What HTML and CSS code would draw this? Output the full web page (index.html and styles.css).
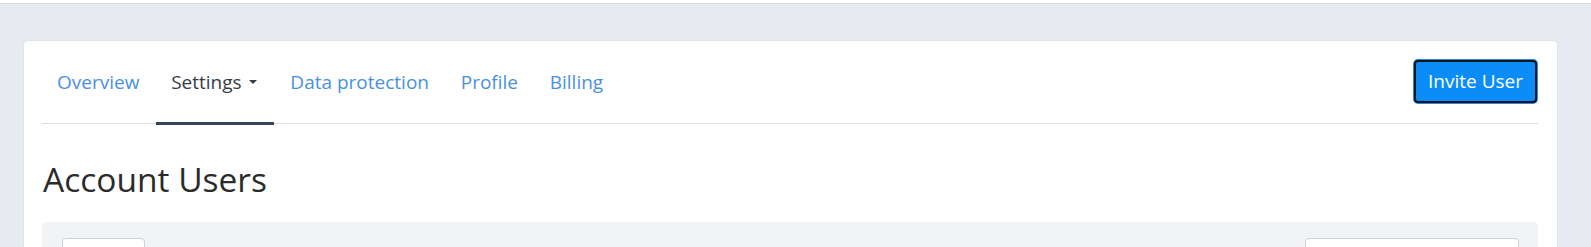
FILE: index.html
```html
<!DOCTYPE html>
<html lang="en">
<head>
<meta charset="utf-8">
<title>Account Users</title>
<link rel="stylesheet" href="styles.css">
</head>
<body>
<div class="topbar"></div>
<main class="page">
  <section class="card">
    <header class="card-head">
      <nav class="tabs">
        <a class="tab" href="#">Overview</a>
        <a class="tab active" href="#">Settings <span class="caret"></span></a>
        <a class="tab" href="#">Data protection</a>
        <a class="tab" href="#">Profile</a>
        <a class="tab" href="#">Billing</a>
      </nav>
      <button class="btn-primary" type="button">Invite User</button>
    </header>
    <h1 class="title">Account Users</h1>
    <div class="toolbar">
      <div class="select-box"></div>
      <div class="search-box"></div>
    </div>
  </section>
</main>
</body>
</html>
```

FILE: styles.css
```css
* { box-sizing: border-box; }

html, body {
  margin: 0;
  padding: 0;
  height: 100%;
  overflow: hidden;
}

body {
  background: #e8eaf1;
  font-family: "Open Sans", "Noto Sans", sans-serif;
  color: #333;
}

.topbar {
  height: 4px;
  background: #ffffff;
  border-bottom: 1px solid #dadce2;
}

.page {
  padding: 36px 33px 0 23px;
}

.card {
  background: #fff;
  border: 1px solid #e1e3e8;
  border-radius: 5px;
  padding: 19px 19px 0 18px;
  height: 260px;
}

.card-head {
  display: flex;
  justify-content: space-between;
  align-items: flex-start;
  border-bottom: 1px solid #dcdee3;
}

.tabs {
  display: flex;
  gap: 1.75px;
}

.tab {
  display: flex;
  align-items: center;
  padding: 10px 15px 28px;
  font-size: 19px;
  line-height: 24px;
  color: #4a90e2;
  text-decoration: none;
  border-bottom: 3px solid transparent;
  margin-bottom: -2px;
}

.tab.active {
  color: #363c46;
  border-bottom-color: #364559;
  padding-right: 17px;
}

.caret {
  display: inline-block;
  width: 0;
  height: 0;
  margin-left: 7px;
  border-left: 4px solid transparent;
  border-right: 4px solid transparent;
  border-top: 4px solid #363c46;
}

.btn-primary {
  font-family: "Open Sans", "Noto Sans", sans-serif;
  font-size: 19px;
  line-height: 25px;
  color: #fff;
  background: #0a8df8;
  border: 2px solid #0d1520;
  border-radius: 4px;
  padding: 7px 12px;
  box-shadow: 0 0 0 1px #2a86e0;
  margin-top: 0;
  margin-right: 1px;
}

.title {
  margin: 35px 0 23px 1px;
  font-size: 33.5px;
  line-height: 40px;
  font-weight: 400;
  color: #2b2b2b;
}

.toolbar {
  display: flex;
  justify-content: space-between;
  background: #f2f3f7;
  border-radius: 5px;
  padding: 16px 19px 0 20px;
  height: 80px;
}

.select-box {
  width: 83px;
  height: 40px;
  background: #fff;
  border: 1px solid #cfd2d8;
  border-radius: 4px;
}

.search-box {
  width: 214px;
  height: 40px;
  background: #fff;
  border: 1px solid #cfd2d8;
  border-radius: 4px;
}
```
